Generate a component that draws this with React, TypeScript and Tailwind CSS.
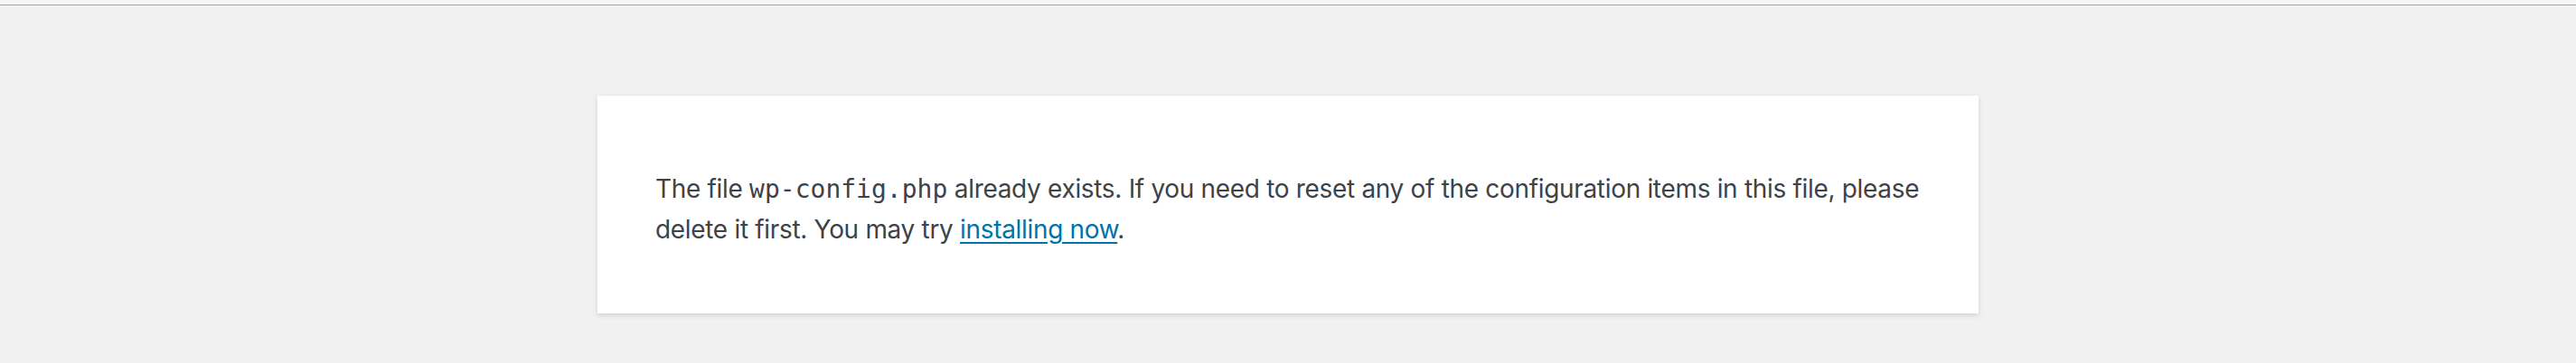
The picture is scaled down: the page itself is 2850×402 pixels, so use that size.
export default function App() {
  return (
    <div className="min-h-[402px] w-full bg-[#f1f1f1]" style={{ fontFamily: 'Inter, "Noto Sans", sans-serif' }}>
      <div className="h-[5px] bg-[#f6f6f6]" />
      <div className="h-px bg-[#a7a7a7]" />
      <div className="flex justify-center pt-[100px]">
        <div className="w-[1528px] bg-white pl-[64px] pr-[52px] pt-[81px] pb-[71px] shadow-[0_2px_6px_rgba(0,0,0,0.13)]">
          <p className="text-[28px] leading-[44px] tracking-[-0.32px] text-[#3c434a]">
            The file{" "}
            <code className="font-['DejaVu_Sans_Mono',monospace] text-[28px] tracking-normal">wp-config.php</code>{" "}
            already exists. If you need to reset any of the configuration items in this file, please delete it first. You may try{" "}
            <a href="#" className="text-[#0073aa] underline underline-offset-[4px]">installing now</a>.
          </p>
        </div>
      </div>
    </div>
  );
}
